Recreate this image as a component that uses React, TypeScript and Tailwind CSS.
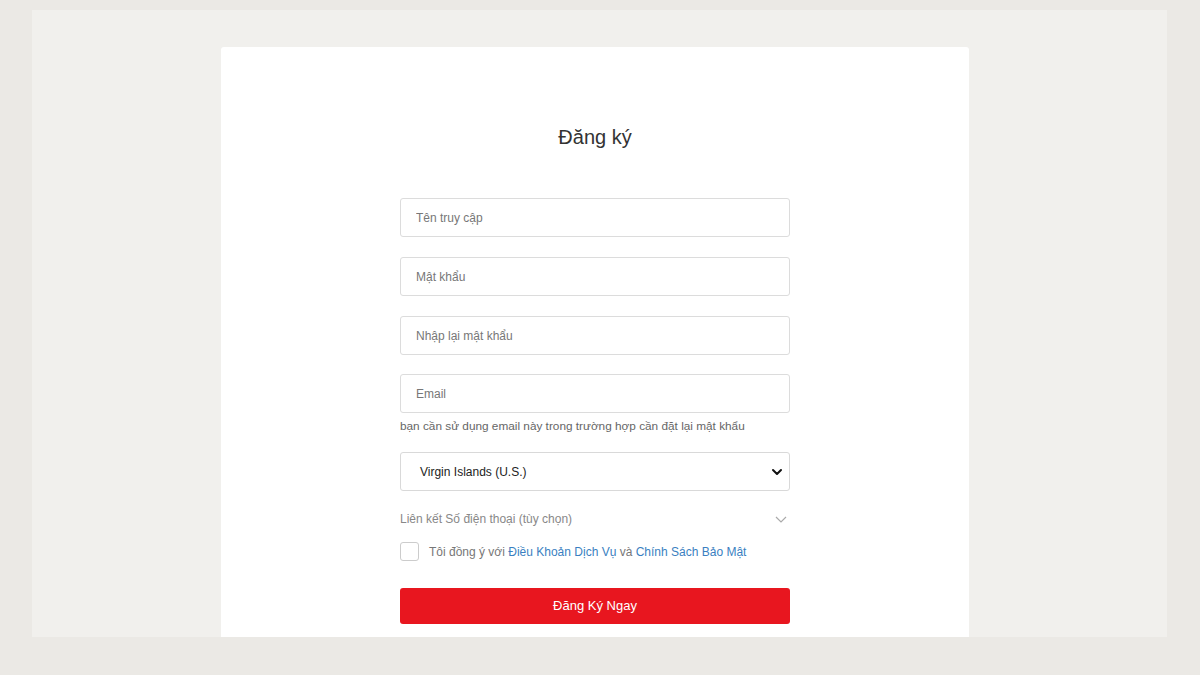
import { useState } from "react";

const fields = ["Tên truy cập", "Mật khẩu", "Nhập lại mật khẩu", "Email"];

const App = () => {
  const [agree, setAgree] = useState(false);

  return (
    <div className="h-[675px] bg-[#ebe9e5] pt-[10px] pl-[32px] pr-[33px] font-['Liberation_Sans',Arial,sans-serif]">
      <div className="h-[627px] bg-[#f1f0ed] flex justify-center pt-[37px] pr-[9px]">
        <div className="w-[748px] h-[590px] bg-white rounded-t-[3px] flex flex-col items-center">
          <h1 className="mt-[78px] text-[20px] leading-[24px] text-[#333]">Đăng ký</h1>

          <form className="w-[390px] mt-[49px] flex flex-col" onSubmit={(e) => e.preventDefault()}>
            {fields.map((f, i) => (
              <input
                key={i}
                type={i === 1 || i === 2 ? "password" : "text"}
                placeholder={f}
                className={`h-[39px] border border-[#dcdcdc] rounded-[3px] px-[15px] text-[12px] text-[#333] placeholder:text-[#777] outline-none ${i === 0 ? "" : i === 3 ? "mt-[19px]" : "mt-[20px]"}`}
              />
            ))}
            <p className="mt-[4px] text-[11.8px] leading-[18px] text-[#666]">
              bạn cần sử dụng email này trong trường hợp cần đặt lại mật khẩu
            </p>

            <div className="mt-[17px] h-[39px] border border-[#d9d9d9] rounded-[3px] pl-[19px] pr-[5px] flex items-center justify-between text-[12px] text-[#222]">
              <span>Virgin Islands (U.S.)</span>
              <svg width="12" height="12" viewBox="0 0 12 12" className="mr-[1px]">
                <path d="M2 4l4 4 4-4" fill="none" stroke="#111" strokeWidth="2" strokeLinecap="round" strokeLinejoin="round" />
              </svg>
            </div>

            <div className="mt-[18px] h-[20px] flex items-center justify-between text-[12px] text-[#888]">
              <span>Liên kết Số điện thoại (tùy chọn)</span>
              <svg width="14" height="14" viewBox="0 0 14 14" className="mr-[2px]">
                <path d="M2 5l5 5 5-5" fill="none" stroke="#aaa" strokeWidth="1.2" />
              </svg>
            </div>

            <label className="mt-[13px] flex items-center text-[12px] text-[#777] cursor-pointer">
              <span
                onClick={() => setAgree(!agree)}
                className="w-[19px] h-[19px] border border-[#ccc] rounded-[3px] bg-white flex items-center justify-center"
              >
                {agree && <span className="text-[12px] text-[#333]">✓</span>}
              </span>
              <span className="ml-[10px]">
                Tôi đồng ý với <a className="text-[#3a7fc1]">Điều Khoản Dịch Vụ</a> và{" "}
                <a className="text-[#3a7fc1]">Chính Sách Bảo Mật</a>
              </span>
            </label>

            <button
              type="submit"
              className="mt-[27px] h-[36px] rounded-[3px] bg-[#e8161f] text-white text-[13px]"
            >
              Đăng Ký Ngay
            </button>
          </form>
        </div>
      </div>
    </div>
  );
};

export default App;
